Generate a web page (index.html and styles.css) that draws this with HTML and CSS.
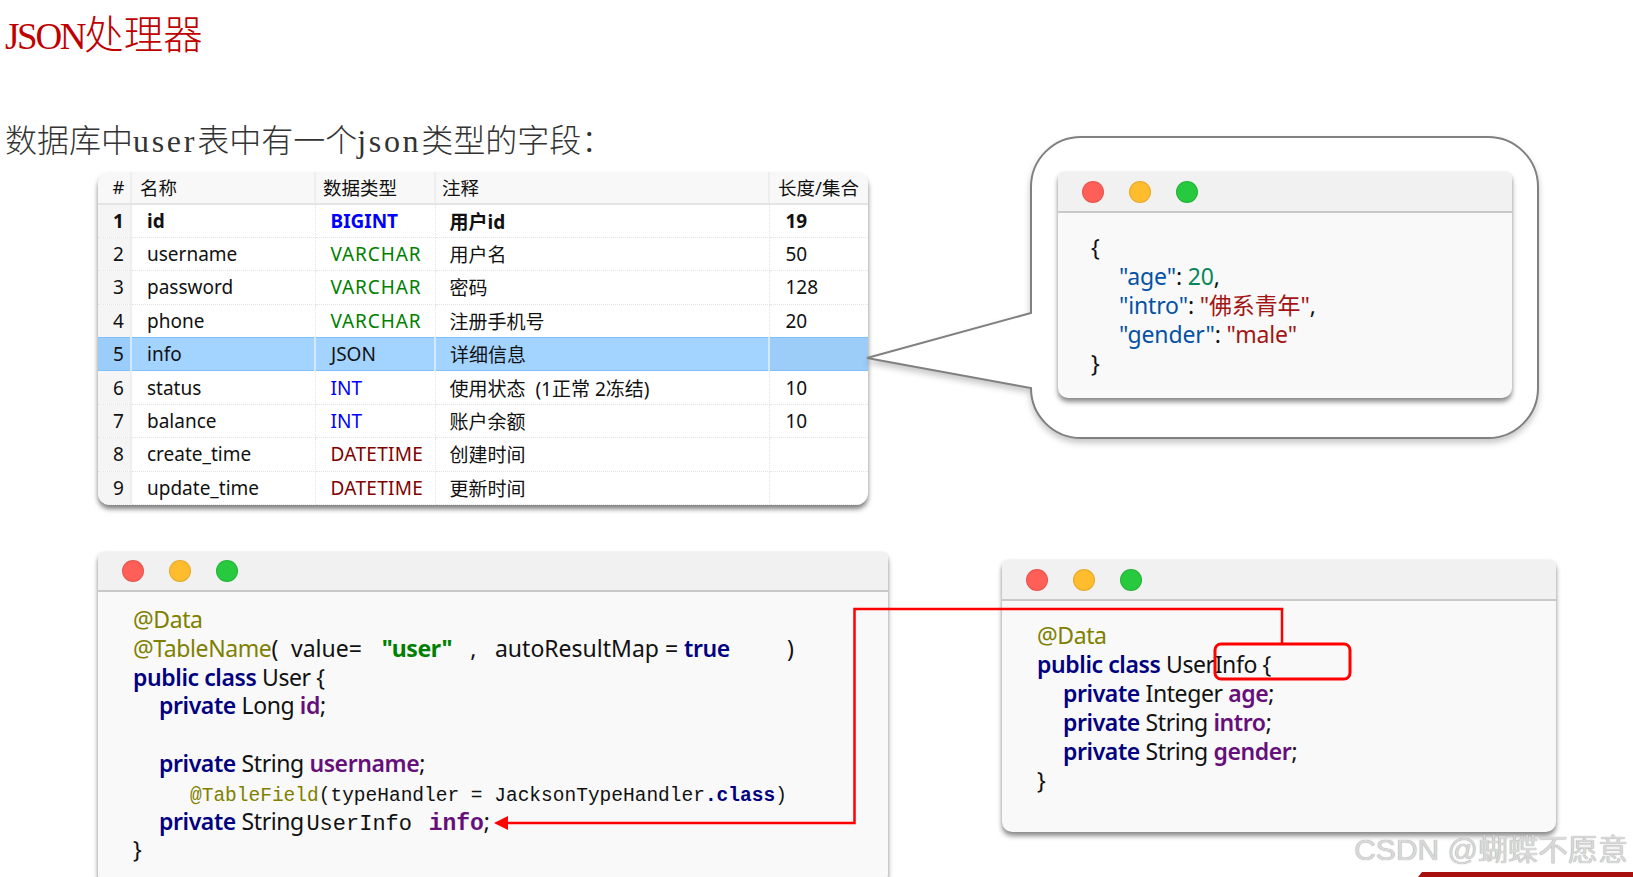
FILE: index.html
```html
<!DOCTYPE html>
<html lang="zh-CN">
<head>
  <meta charset="UTF-8">
  <title>JSON处理器</title>
  <link rel="stylesheet" href="styles.css">
</head>
<body>
  <h1 class="title"><span class="latin">JSON</span>处理器</h1>

  <div class="row-top">
    <div class="col-left">
      <p class="subtitle">数据库中<span class="latin">user</span>表中有一个<span class="latin">json</span>类型的字段：</p>
      <div class="table-box">
        <table class="fields">
          <colgroup>
            <col class="c-num"><col class="c-name"><col class="c-type"><col class="c-note"><col class="c-len">
          </colgroup>
          <thead>
            <tr><th class="num">#</th><th>名称</th><th>数据类型</th><th>注释</th><th>长度/集合</th></tr>
          </thead>
          <tbody>
            <tr class="key"><td class="num">1</td><td>id</td><td class="t-int">BIGINT</td><td>用户id</td><td>19</td></tr>
            <tr><td class="num">2</td><td>username</td><td class="t-str">VARCHAR</td><td>用户名</td><td>50</td></tr>
            <tr><td class="num">3</td><td>password</td><td class="t-str">VARCHAR</td><td>密码</td><td>128</td></tr>
            <tr><td class="num">4</td><td>phone</td><td class="t-str">VARCHAR</td><td>注册手机号</td><td>20</td></tr>
            <tr class="picked"><td class="num">5</td><td>info</td><td>JSON</td><td>详细信息</td><td class="last"></td></tr>
            <tr><td class="num">6</td><td>status</td><td class="t-int">INT</td><td>使用状态&nbsp; (1正常 2冻结)</td><td>10</td></tr>
            <tr><td class="num">7</td><td>balance</td><td class="t-int">INT</td><td>账户余额</td><td>10</td></tr>
            <tr><td class="num">8</td><td>create_time</td><td class="t-date">DATETIME</td><td>创建时间</td><td></td></tr>
            <tr><td class="num">9</td><td>update_time</td><td class="t-date">DATETIME</td><td>更新时间</td><td></td></tr>
          </tbody>
        </table>
      </div>
    </div>

    <div class="callout">
      <svg class="callout-shape" width="507" height="301" viewBox="0 0 507 301">
        <path d="M0 50A50 50 0 0 1 50 0H457A50 50 0 0 1 507 50V251A50 50 0 0 1 457 301H50A50 50 0 0 1 0 251L-164 221L0 176Z"/>
      </svg>
      <div class="win win-json">
        <div class="win-bar"><i class="dot red"></i><i class="dot amber"></i><i class="dot green"></i></div>
        <div class="code">
          <div>{</div>
          <div class="in"><span class="k">"age"</span>: <span class="n">20</span>,</div>
          <div class="in"><span class="k">"intro"</span>: <span class="s">"佛系青年"</span>,</div>
          <div class="in"><span class="k">"gender"</span>: <span class="s">"male"</span></div>
          <div>}</div>
        </div>
      </div>
    </div>
  </div>

  <div class="row-bottom">
    <div class="win win-user">
      <div class="win-bar"><i class="dot red"></i><i class="dot amber"></i><i class="dot green"></i></div>
      <div class="code">
        <div class="a">@Data</div>
        <div><span class="a">@TableName</span><span>(</span><span class="gap-value plain">value=</span><span class="str gap-user">"user"</span><span class="gap-comma">,</span><span class="gap-auto plain">autoResultMap = </span><span class="kw">true</span><span class="gap-close">)</span></div>
        <div><span class="kw">public class</span> User {</div>
        <div class="in"><span class="kw">private</span> Long <span class="f">id</span>;</div>
        <div class="blank"></div>
        <div class="in"><span class="kw">private</span> String <span class="f">username</span>;</div>
        <div class="in2 mono"><span class="a2">@TableField</span>(typeHandler = JacksonTypeHandler<b class="kw">.class</b>)</div>
        <div class="in"><span class="kw">private</span> String <span class="mono-big">UserInfo</span> <span class="mono-big f2">info</span>;</div>
        <div>}</div>
      </div>
    </div>

    <div class="win win-info">
      <div class="win-bar"><i class="dot red"></i><i class="dot amber"></i><i class="dot green"></i></div>
      <div class="code">
        <div class="a">@Data</div>
        <div><span class="kw">public class</span> UserInfo {</div>
        <div class="in"><span class="kw">private</span> Integer <span class="f">age</span>;</div>
        <div class="in"><span class="kw">private</span> String <span class="f">intro</span>;</div>
        <div class="in"><span class="kw">private</span> String <span class="f">gender</span>;</div>
        <div>}</div>
      </div>
    </div>
  </div>

  <!-- red connector between the two classes -->
  <svg class="links" width="1633" height="877" viewBox="0 0 1633 877">
    <path class="link" d="M1282 644V609H854.5V823H504"/>
    <path class="link-head" d="M494 823L508 816V830Z"/>
    <rect class="link box" x="1215" y="644" width="135" height="35" rx="6"/>
  </svg>

  <div class="watermark">CSDN @蝴蝶不愿意</div>
  <div class="foot-bar"></div>
</body>
</html>
```

FILE: styles.css
```css
*{margin:0;padding:0;box-sizing:border-box;}
html,body{width:100%;height:100%;overflow:hidden;background:#fff;}
body{position:relative;padding-left:5px;font-family:"Noto Sans","Noto Sans CJK SC",sans-serif;color:#111;}

.title{height:120px;padding-top:7px;font:300 39.5px/50px "Noto Sans CJK SC",sans-serif;color:#c00000;}
.title .latin{font-family:"Liberation Serif",serif;font-weight:400;font-size:37px;letter-spacing:-2.3px;}
.subtitle{height:40px;font:300 32px/36px "Noto Sans CJK SC",sans-serif;color:#333;}
.subtitle .latin{font-family:"Liberation Serif",serif;font-weight:400;letter-spacing:2.7px;}

.row-top{display:flex;align-items:flex-start;height:385px;}
.col-left{width:863px;flex:none;}

.table-box{width:770px;height:333px;margin:12px 0 0 93px;border-radius:12px;overflow:hidden;background:#fff;box-shadow:0 4px 5px rgba(0,0,0,.5);}
.fields{width:770px;table-layout:fixed;border-collapse:collapse;font-size:19px;}
.c-num{width:33px;}
.c-name{width:184px;}
.c-type{width:120px;}
.c-note{width:334px;}
.c-len{width:99px;}
.fields th{height:32px;padding-left:8px;padding-bottom:2px;background:#f8f8f8;font-size:18.5px;font-weight:400;text-align:left;border-right:2px solid #eee;border-bottom:2px solid #e4e4e4;white-space:nowrap;overflow:hidden;}
.fields th:nth-child(3){padding-left:7px;}
.fields th:nth-child(4){padding-left:6px;}
.fields th:last-child{border-right:0;}
.fields td{height:33.4px;padding-left:15px;border-right:1px dotted #e4e4e4;border-bottom:1px dotted #e4e4e4;white-space:nowrap;overflow:hidden;}
.fields td:nth-child(4){padding-left:14px;}
.fields td:last-child{border-right:0;padding-left:16px;}
.fields .num{padding-left:9px;text-align:center;background:#f5f5f5;border-right:2px solid #eee;}
.fields th.num{background:#f8f8f8;}
.key td{font-weight:700;}
.t-int{color:#0000ff;}
.t-str{color:#008000;letter-spacing:.9px;}
.t-date{color:#800000;letter-spacing:.3px;}
.picked td{background:#a3d3ff;border-right:2px solid #d2e9ff;border-bottom:1px solid #7fc0fb;border-top:1px solid #7fc0fb;}
.picked td.num{background:#9bcdfa;border-right:2px solid #d2e9ff;}
.picked td.last{background:#9ccdf8;}

.callout{position:relative;flex:none;width:507px;height:301px;margin:17px 0 0 163px;padding:35px 0 0 27px;}
.callout-shape{position:absolute;left:0;top:0;overflow:visible;filter:drop-shadow(0 4px 3px rgba(0,0,0,.22));}
.callout-shape path{fill:#fff;stroke:#808080;stroke-width:2;}

.win{position:relative;flex:none;background:#f8f9f8;border-radius:6px 6px 10px 10px;box-shadow:0 4px 5px rgba(0,0,0,.45),0 0 3px rgba(0,0,0,.08);}
.win-bar{display:flex;align-items:center;gap:25px;height:41px;padding-left:24px;background:#f1f1f1;border-bottom:2px solid #c9c9c9;border-radius:6px 6px 0 0;}
.dot{width:22px;height:22px;border-radius:50%;border:1px solid rgba(0,0,0,.1);}
.red{background:#ff5f56;}
.amber{background:#ffbd2e;}
.green{background:#27c93f;}

.code{font-size:23px;line-height:29px;letter-spacing:-.4px;color:#111;}
.code > div{height:29px;white-space:pre;}
.code .in{padding-left:26px;}
.code .in2{padding-left:57px;}
.plain{letter-spacing:0;}
.kw{color:#000080;font-weight:600;}
.a{color:#808000;}
.f{color:#660e7a;font-weight:600;}
.str{color:#008000;font-weight:700;}
.k{color:#0451a5;}
.n{color:#098658;}
.s{color:#a31515;}

.win-json{width:454px;height:226px;}
.win-json .code{padding:20px 0 0 33px;letter-spacing:-.15px;}
.win-json .code .in{padding-left:28px;}
.win-user{width:790px;height:332px;}
.win-user .win-bar{height:40px;}
.win-user .code{padding:13px 0 0 35px;}
.win-user .code > div{height:28.8px;}
.win-info{width:554px;height:272px;margin:8px 0 0 114px;}
.win-info .code{padding:20px 0 0 35px;}

.row-bottom{display:flex;align-items:flex-start;margin:47px 0 0 93px;}
.gap-value{margin-left:13px;}
.gap-user{margin-left:20px;}
.gap-comma{margin-left:18px;}
.gap-auto{margin-left:19px;}
.gap-close{margin-left:57px;}
.code .mono{padding-top:4px;font:19.5px/29px "Liberation Mono",monospace;letter-spacing:0;}
.a2{color:#808000;}
.mono b{font-weight:700;}
.mono-big{margin-left:-3px;font:22px/29px "Liberation Mono",monospace;letter-spacing:0;}
.f2{margin-left:11px;font-size:23px;font-weight:700;color:#660e7a;}

.links{position:absolute;left:0;top:0;pointer-events:none;}
.link{fill:none;stroke:#f00;stroke-width:2.5;}
.link.box{stroke-width:3;}
.link-head{fill:#f00;}

.watermark{position:absolute;right:5px;bottom:9px;font:30px/36px "Liberation Sans","Noto Sans CJK SC",sans-serif;color:#d9d9d9;text-shadow:0 0 1px #888;white-space:nowrap;}
.foot-bar{position:absolute;right:0;bottom:0;width:215px;height:5px;background:#a80f0f;clip-path:polygon(4px 0,100% 0,100% 100%,0 100%);}
```
